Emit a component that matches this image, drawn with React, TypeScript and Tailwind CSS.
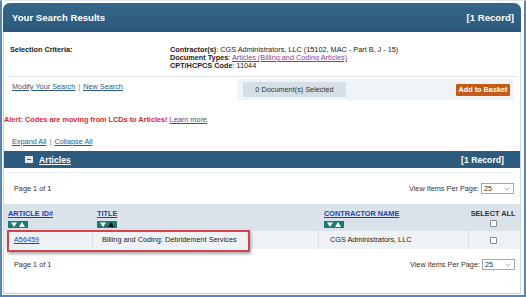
import type { ReactNode } from "react";

function SortIcon({ upActive = false }: { upActive?: boolean }) {
  return (
    <svg width="20" height="7" viewBox="0 0 20 7" className="block">
      <rect width="20" height="7" fill="#1b7a72" />
      <polygon points="3,1.5 9,1.5 6,6" fill="#fff" />
      <polygon points="11,6 17,6 14,1" fill={upActive ? "#111" : "#fff"} />
    </svg>
  );
}

function Checkbox() {
  return <span className="block h-[7px] w-[7px] rounded-[1px] border border-[#8a8a8a] bg-white" />;
}

function PerPage() {
  return (
    <div className="flex items-center gap-[2px] text-[#333]">
      <span>View Items Per Page:</span>
      <div className="flex h-[11px] w-[33px] items-center justify-between border border-[#a8a8a8] bg-white pl-[2px] pr-[3px]">
        <span>25</span>
        <svg width="6" height="4" viewBox="0 0 6 4">
          <polyline points="0.5,0.5 3,3 5.5,0.5" fill="none" stroke="#999" strokeWidth="0.8" />
        </svg>
      </div>
    </div>
  );
}

function Sep() {
  return <span className="mx-[3px] text-[#777]">|</span>;
}

function HeadCell({ children, className = "" }: { children: ReactNode; className?: string }) {
  return <div className={`flex flex-col pt-[6px] ${className}`}>{children}</div>;
}

export default function App() {
  return (
    <div className="h-[297px] w-[526px] overflow-hidden border-x-2 border-b-2 border-t border-x-[#5585bb] border-b-[#5585bb] border-t-[#dde6ee] bg-white font-['Liberation_Sans',Arial,sans-serif] text-[7.3px] leading-[8px] text-[#222]">
      <div className="ml-[1px] mt-[2px] flex h-[291px] w-[518px] flex-col rounded-t-[7px] border-x border-b border-[#cdd6de]">
        {/* Header */}
        <div className="-mx-px flex h-[29px] items-center justify-between rounded-t-[7px] bg-gradient-to-b from-[#356689] to-[#2b597c] pl-[9px] pr-[7px] text-[9.6px] font-bold text-white">
          <span>Your Search Results</span>
          <span>[1 Record]</span>
        </div>

        {/* Selection criteria */}
        <div className="mx-[4px] flex h-[45px] border-b border-[#dfe4e8] pl-[2px] pt-[14px]">
          <div className="w-[160px] font-bold">Selection Criteria:</div>
          <div className="flex flex-col">
            <div>
              <b>Contractor(s)</b>: CGS Administrators, LLC (15102, MAC - Part B, J - 15)
            </div>
            <div>
              <b>Document Types</b>:{" "}
              <span className="text-[#8b3a8f] underline">Articles (Billing and Coding Articles)</span>
            </div>
            <div>
              <b>CPT/HCPCS Code</b>: 11044
            </div>
          </div>
        </div>

        {/* Actions */}
        <div className="flex h-[24px] items-start">
          <div className="mt-[6px] w-[233px] pl-[8px] text-[#2e5a87]">
            <span className="underline">Modify Your Search</span>
            <Sep />
            <span className="underline">New Search</span>
          </div>
          <div className="mt-[2px] flex h-[21px] w-[276px] items-center bg-[#f1f4f7] pl-[6px] pr-[3px]">
            <div className="flex h-[15px] w-[103px] items-center justify-center bg-[#d6dfe6] text-[#333]">
              0 Document(s) Selected
            </div>
            <div className="ml-auto flex h-[12px] w-[54px] items-center justify-center rounded-[1px] bg-[#c65a17] font-bold text-white">
              Add to Basket
            </div>
          </div>
        </div>

        {/* Alert */}
        <div className="mt-[15px] font-bold text-[#e3262f]">
          Alert: Codes are moving from LCDs to Articles!{" "}
          <span className="font-normal text-[#2e5a87] underline">Learn more</span>
        </div>

        {/* Expand / collapse */}
        <div className="mt-[14px] pl-[8px] text-[#2e5a87]">
          <span className="underline">Expand All</span>
          <Sep />
          <span className="underline">Collapse All</span>
        </div>

        {/* Articles bar */}
        <div className="mt-[5px] flex h-[17px] items-center justify-between bg-[#2d5b7e] pl-[21px] pr-[16px] text-[8.7px] font-bold text-white">
          <div className="flex items-center gap-[6px]">
            <span className="flex h-[7px] w-[8px] items-center justify-center bg-[#e4e9ee]">
              <span className="h-[1.5px] w-[4px] bg-[#2d5b7e]" />
            </span>
            <span className="underline">Articles</span>
          </div>
          <span>[1 Record]</span>
        </div>
        <div className="mx-[4px] mt-[4px] h-px bg-[#eef1f3]" />

        {/* Pager top */}
        <div className="flex h-[31px] items-center justify-between pl-[10px] pr-[6px]">
          <span className="text-[#333]">Page 1 of 1</span>
          <PerPage />
        </div>

        {/* Table */}
        <div className="relative">
          <div className="grid h-[27px] grid-cols-[88px_226px_150px_1fr] bg-[#dbe3ea] font-bold">
            <HeadCell className="pl-[4px]">
              <span className="text-[#1f3fb8] underline">ARTICLE ID#</span>
              <span className="mt-[3px]">
                <SortIcon />
              </span>
            </HeadCell>
            <HeadCell className="pl-[5px]">
              <span className="text-[#1f3fb8] underline">TITLE</span>
              <span className="mt-[3px]">
                <SortIcon upActive />
              </span>
            </HeadCell>
            <HeadCell className="pl-[6px]">
              <span className="text-[#1f3fb8] underline">CONTRACTOR NAME</span>
              <span className="mt-[3px]">
                <SortIcon />
              </span>
            </HeadCell>
            <HeadCell className="items-center pr-[2px] text-[#333]">
              <span>SELECT ALL</span>
              <span className="mt-[2px]">
                <Checkbox />
              </span>
            </HeadCell>
          </div>
          <div className="grid h-[18px] grid-cols-[88px_226px_150px_1fr] items-stretch bg-[#eef2f5]">
            <div className="flex items-center pl-[10px] text-[#1f3fb8] underline">A56459</div>
            <div className="flex items-center border-l border-[#d9e0e6] pl-[9px]">
              Billing and Coding: Debridement Services
            </div>
            <div className="flex items-center border-l border-[#d9e0e6] pl-[11px]">CGS Administrators, LLC</div>
            <div className="flex items-center justify-center border-l border-[#d9e0e6] pr-[2px]">
              <Checkbox />
            </div>
          </div>
          {/* highlight overlay */}
          <div className="pointer-events-none absolute left-[3px] top-[26px] h-[22px] w-[243px] border-2 border-[#dc3f4c] shadow-[1px_2px_3px_rgba(0,0,0,0.35)]" />
        </div>

        {/* Pager bottom */}
        <div className="mt-[10px] flex items-center justify-between pl-[10px] pr-[5px]">
          <span className="text-[#333]">Page 1 of 1</span>
          <PerPage />
        </div>
      </div>
    </div>
  );
}
